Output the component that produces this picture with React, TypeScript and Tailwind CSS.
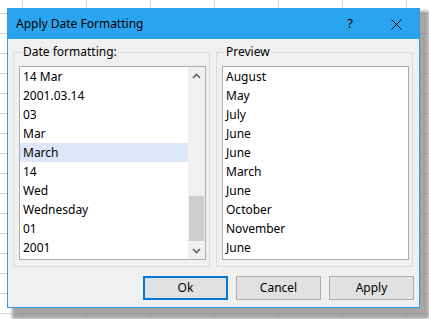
import React from "react";

const leftItems = ["14 Mar", "2001.03.14", "03", "Mar", "March", "14", "Wed", "Wednesday", "01", "2001"];
const rightItems = ["August", "May", "July", "June", "June", "March", "June", "October", "November", "June"];

const font = { fontFamily: '"Noto Sans", "Open Sans", sans-serif' };

function Background() {
  const cols = Array.from({ length: 7 });
  const rows = Array.from({ length: 16 });
  return (
    <div className="absolute inset-0 flex flex-col bg-white">
      <div className="h-[14px] border-b border-[#d4d4d4] flex shrink-0">
        <div className="w-[23px] h-full border-r border-[#d4d4d4] shrink-0" />
        {cols.map((_, i) => (
          <div key={i} className="w-[64px] h-full border-r border-[#d4d4d4] shrink-0" />
        ))}
      </div>
      {rows.map((_, r) => (
        <div key={r} className="h-[20px] border-b border-[#d4d4d4] flex shrink-0">
          <div className="w-[23px] h-full border-r border-[#d4d4d4] shrink-0" />
          {cols.map((_, i) => (
            <div key={i} className="w-[64px] h-full border-r border-[#d4d4d4] shrink-0" />
          ))}
        </div>
      ))}
    </div>
  );
}

function Chevron({ up }: { up: boolean }) {
  return (
    <svg width="9" height="6" viewBox="0 0 9 6">
      {up ? (
        <path d="M1 5 L4.5 1.5 L8 5" fill="none" stroke="#606060" strokeWidth="1.6" />
      ) : (
        <path d="M1 1 L4.5 4.5 L8 1" fill="none" stroke="#606060" strokeWidth="1.6" />
      )}
    </svg>
  );
}

function GroupBox({ label, children }: { label: string; children: React.ReactNode }) {
  return (
    <div className="relative w-[197px] h-[215px] border border-[#dcdcdc] pt-[13px] pl-[5px] pr-[4px]">
      <div className="absolute -top-[9px] left-[7px] px-[2px] bg-[#f0f0f0] text-[12px] leading-[16px] text-black">
        {label}
      </div>
      {children}
    </div>
  );
}

export default function App() {
  return (
    <div className="relative w-[429px] h-[319px] overflow-hidden" style={font}>
      <Background />
      <div className="absolute left-[12px] top-[11px] w-[417px] h-[308px] bg-[#8f8f8f] opacity-80 blur-[1.5px]" />
      <div className="absolute left-[7px] top-[8px] w-[413px] h-[300px] border border-[#2b9ce6] bg-[#f0f0f0] flex flex-col">
        <div className="h-[30px] bg-[#2aa4ef] flex items-center shrink-0">
          <div className="pl-[8px] text-[12px] text-black flex-1">Apply Date Formatting</div>
          <div className="w-[46px] h-full flex items-center justify-center text-[13px] text-black">?</div>
          <div className="w-[46px] h-full flex items-center justify-center">
            <svg width="11" height="11" viewBox="0 0 11 11">
              <path d="M0.5 0.5 L10.5 10.5 M10.5 0.5 L0.5 10.5" stroke="#000" strokeWidth="1" />
            </svg>
          </div>
        </div>
        <div className="flex-1 flex flex-col pt-[13px] pl-[5px] pr-[4px]">
          <div className="flex gap-[6px]">
            <GroupBox label="Date formatting:">
              <div className="w-[187px] h-[194px] border border-[#adadad] bg-white flex">
                <div className="flex-1 flex flex-col">
                  {leftItems.map((t, i) => (
                    <div
                      key={i}
                      className={`h-[19px] pl-[3px] text-[12px] leading-[19px] text-black ${i === 4 ? "bg-[#dde7f8]" : ""}`}
                    >
                      {t}
                    </div>
                  ))}
                </div>
                <div className="w-[17px] h-full bg-[#f0f0f0] flex flex-col">
                  <div className="h-[17px] flex items-center justify-center">
                    <Chevron up />
                  </div>
                  <div className="flex-1 flex flex-col px-[1px]">
                    <div className="h-[112px]" />
                    <div className="h-[45px] bg-[#cdcdcd]" />
                  </div>
                  <div className="h-[17px] flex items-center justify-center">
                    <Chevron up={false} />
                  </div>
                </div>
              </div>
            </GroupBox>
            <GroupBox label="Preview">
              <div className="w-[187px] h-[194px] border border-[#adadad] bg-white flex flex-col">
                {rightItems.map((t, i) => (
                  <div key={i} className="h-[19px] pl-[3px] text-[12px] leading-[19px] text-black">
                    {t}
                  </div>
                ))}
              </div>
            </GroupBox>
          </div>
          <div className="flex justify-end gap-[8px] mt-[9px] pr-[1px]">
            <div className="w-[85px] h-[24px] border-2 border-[#0078d7] bg-[#e1e1e1] flex items-center justify-center text-[12px] text-black">
              Ok
            </div>
            <div className="w-[85px] h-[24px] border border-[#adadad] bg-[#e1e1e1] flex items-center justify-center text-[12px] text-black">
              Cancel
            </div>
            <div className="w-[85px] h-[24px] border border-[#adadad] bg-[#e1e1e1] flex items-center justify-center text-[12px] text-black">
              Apply
            </div>
          </div>
        </div>
      </div>
    </div>
  );
}
